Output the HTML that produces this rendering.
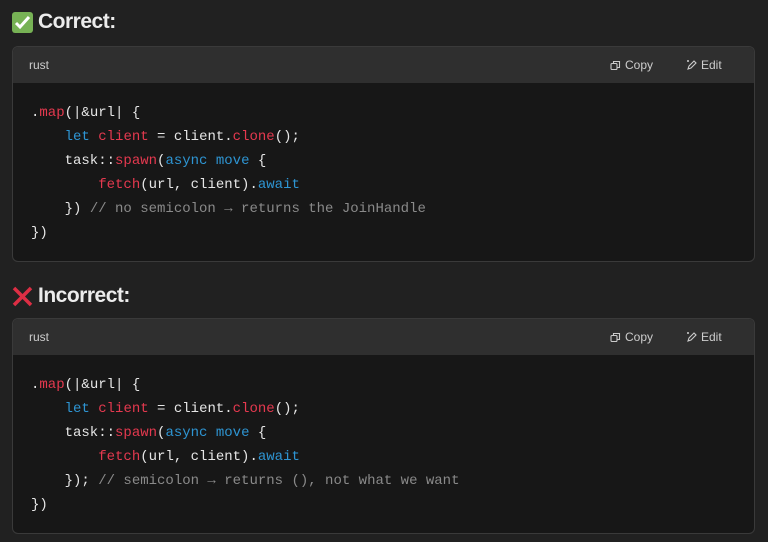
<!DOCTYPE html><html><head><style>
body{margin:0;background:#212121;width:768px;height:542px;overflow:hidden;font-family:"Liberation Sans",sans-serif;color:#ececec}
.h{position:absolute;left:12px;font-size:21px;font-weight:bold;display:flex;align-items:center;gap:5px;letter-spacing:-0.5px}
.blk{position:absolute;left:12px;width:741px;border:1px solid #3a3a3a;border-radius:6px;background:#171717;overflow:hidden}
.hd{height:36px;background:#2f2f2f;position:relative;font-size:12px;color:#cdcdcd}
.hd .l{position:absolute;left:16px;top:11px}
.hd .b{position:absolute;top:11px;display:flex;align-items:center;gap:4px}
pre{margin:0;padding:18px 18px 0;font-family:"Liberation Mono",monospace;font-size:14px;line-height:24px;color:#e6e6e6}
.r{color:#e5394f}.k{color:#2e95d3}.c{color:#8a8a8a}
</style></head><body>
<div class="h" style="top:10px"><svg width="21" height="21"><rect width="21" height="21" rx="3" fill="#77b255"/><path d="M4 11l4 4 9-10" stroke="#fff" stroke-width="3" fill="none"/></svg>Correct:</div>
<div class="blk" style="top:46px;height:214px"><div class="hd"><span class="l">rust</span>
<span class="b" style="left:597px"><svg width="11" height="11" viewBox="0 0 11 11" fill="none" stroke="#ccc" stroke-width="1.1"><rect x="1" y="3.5" width="6" height="6" rx="1"/><path d="M3.5 3.5V1.5h6v6h-2"/></svg>Copy</span>
<span class="b" style="left:673px"><svg width="11" height="11" viewBox="0 0 11 11" fill="none" stroke="#ccc" stroke-width="1.1"><path d="M2 9l1-3 5-5 2 2-5 5z M1 1l2 0M2 0v2"/></svg>Edit</span></div>
<pre>.<span class="r">map</span>(|&amp;url| {
    <span class="k">let</span> <span class="r">client</span> = client.<span class="r">clone</span>();
    task::<span class="r">spawn</span>(<span class="k">async</span> <span class="k">move</span> {
        <span class="r">fetch</span>(url, client).<span class="k">await</span>
    }) <span class="c">// no semicolon → returns the JoinHandle</span>
})</pre></div>
<div class="h" style="top:284px"><svg width="21" height="21"><path d="M2 2l17 17M19 2L2 19" stroke="#dd2e44" stroke-width="3.5"/></svg>Incorrect:</div>
<div class="blk" style="top:318px;height:214px"><div class="hd"><span class="l">rust</span>
<span class="b" style="left:597px"><svg width="11" height="11" viewBox="0 0 11 11" fill="none" stroke="#ccc" stroke-width="1.1"><rect x="1" y="3.5" width="6" height="6" rx="1"/><path d="M3.5 3.5V1.5h6v6h-2"/></svg>Copy</span>
<span class="b" style="left:673px"><svg width="11" height="11" viewBox="0 0 11 11" fill="none" stroke="#ccc" stroke-width="1.1"><path d="M2 9l1-3 5-5 2 2-5 5z M1 1l2 0M2 0v2"/></svg>Edit</span></div>
<pre>.<span class="r">map</span>(|&amp;url| {
    <span class="k">let</span> <span class="r">client</span> = client.<span class="r">clone</span>();
    task::<span class="r">spawn</span>(<span class="k">async</span> <span class="k">move</span> {
        <span class="r">fetch</span>(url, client).<span class="k">await</span>
    }); <span class="c">// semicolon → returns (), not what we want</span>
})</pre></div>
</body></html>
